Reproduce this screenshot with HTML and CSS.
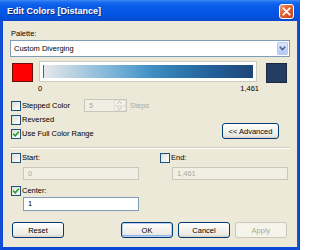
FILE: index.html
```html
<!DOCTYPE html>
<html>
<head>
<meta charset="utf-8">
<link rel="stylesheet" href="styles.css">
</head>
<body>
<div class="window">
  <div class="titlebar">
    <span class="title">Edit Colors [Distance]</span>
    <div class="close">
      <svg width="15" height="15" viewBox="0 0 15 15">
        <defs>
          <linearGradient id="cg" x1="0" y1="0" x2="1" y2="1">
            <stop offset="0" stop-color="#F29A7A"/>
            <stop offset="0.45" stop-color="#E0602F"/>
            <stop offset="1" stop-color="#C3401A"/>
          </linearGradient>
        </defs>
        <rect x="0.5" y="0.5" width="14" height="14" rx="2.5" fill="url(#cg)" stroke="#FFFFFF" stroke-width="1"/>
        <path d="M4.3 4.3 L10.7 10.7 M10.7 4.3 L4.3 10.7" stroke="#FFFFFF" stroke-width="1.8" stroke-linecap="round"/>
      </svg>
    </div>
  </div>
  <div class="client">
    <div class="label">Palette:</div>
    <div class="select">
      <span class="select-text">Custom Diverging</span>
      <div class="drop-btn">
        <svg width="7" height="5" viewBox="0 0 7 5"><path d="M0.8 0.8 L3.5 3.6 L6.2 0.8" fill="none" stroke="#4D6185" stroke-width="1.5"/></svg>
      </div>
    </div>
    <div class="ramp-row">
      <div class="swatch red"></div>
      <div class="ramp"><div class="ramp-inner"><span class="marker"></span></div></div>
      <div class="swatch navy"></div>
    </div>
    <div class="ramp-labels"><span class="lab-min">0</span><span class="lab-max">1,461</span></div>
    <div class="options">
      <div class="opts-left">
        <div class="row row-first">
          <span class="cb"></span><span class="cb-text">Stepped Color</span>
          <div class="spin">
            <span class="spin-val">5</span>
            <div class="spin-btns">
              <span class="spin-up"><svg width="5" height="3" viewBox="0 0 5 3"><path d="M0.5 2.6 L2.5 0.5 L4.5 2.6" fill="none" stroke="#B8B6AA" stroke-width="1"/></svg></span>
              <span class="spin-down"><svg width="5" height="3" viewBox="0 0 5 3"><path d="M0.5 0.4 L2.5 2.5 L4.5 0.4" fill="none" stroke="#B8B6AA" stroke-width="1"/></svg></span>
            </div>
          </div>
          <span class="steps">Steps</span>
        </div>
        <div class="row">
          <span class="cb"></span><span class="cb-text">Reversed</span>
        </div>
        <div class="row">
          <span class="cb checked"><svg width="8" height="8" viewBox="0 0 8 8"><path d="M1.2 3.8 L3.2 5.8 L6.8 1.8" fill="none" stroke="#21A121" stroke-width="1.6"/></svg></span><span class="cb-text">Use Full Color Range</span>
        </div>
      </div>
      <button class="btn advanced">&lt;&lt; Advanced</button>
    </div>
    <div class="sep"></div>
    <div class="range">
      <div class="range-col left-col">
        <div class="cb-row"><span class="cb"></span><span class="cb-text">Start:</span></div>
        <div class="input disabled start-input">0</div>
      </div>
      <div class="range-col right-col">
        <div class="cb-row"><span class="cb"></span><span class="cb-text">End:</span></div>
        <div class="input disabled end-input">1,461</div>
      </div>
    </div>
    <div class="center-block">
      <div class="cb-row"><span class="cb checked"><svg width="8" height="8" viewBox="0 0 8 8"><path d="M1.2 3.8 L3.2 5.8 L6.8 1.8" fill="none" stroke="#21A121" stroke-width="1.6"/></svg></span><span class="cb-text">Center:</span></div>
      <div class="input center-input">1</div>
    </div>
    <div class="buttons">
      <button class="btn reset">Reset</button>
      <div class="btn-group">
        <button class="btn default">OK</button>
        <button class="btn">Cancel</button>
        <button class="btn disabled-btn">Apply</button>
      </div>
    </div>
  </div>
</div>
</body>
</html>
```

FILE: styles.css
```css
html, body {
  margin: 0;
  padding: 0;
}
body {
  width: 300px;
  height: 250px;
  overflow: hidden;
  font-family: "Liberation Sans", Arial, sans-serif;
  font-size: 7.5px;
  color: #000;
}
.window {
  width: 300px;
  height: 250px;
  display: flex;
  flex-direction: column;
  background: linear-gradient(to right, #0B3FC9 0, #1D5BE0 1px, #0B48D6 2px, #0B48D6 297px, #1D5BE0 298px, #0733B5 300px);
}
.titlebar {
  height: 21px;
  flex: none;
  display: flex;
  align-items: center;
  justify-content: space-between;
  padding: 0 5px 0 7px;
  background: linear-gradient(#3D8BF7 0, #1C6EF0 2px, #0A5EE9 5px, #0555E4 12px, #0450DA 18px, #0848C9 21px);
}
.title {
  color: #fff;
  font-weight: bold;
  font-size: 9px;
  text-shadow: 1px 1px 0 #0A2E8A;
  margin-top: 1px;
}
.close {
  width: 15px;
  height: 15px;
  margin-top: 2px;
  margin-right: 1px;
}
.close svg { display: block; }
.client {
  flex: 1;
  margin: 0 3px 3px 3px;
  background: #ECE9D8;
  padding: 0 7px;
  display: flex;
  flex-direction: column;
}
.label {
  margin-top: 8px;
  height: 10px;
  line-height: 10px;
  padding-left: 1px;
}
.select {
  margin-top: 1px;
  height: 17px;
  box-sizing: border-box;
  border: 1px solid #7F9DB9;
  background: #fff;
  display: flex;
  align-items: center;
  justify-content: space-between;
  padding: 0 1px 0 3px;
}
.drop-btn {
  width: 11px;
  height: 13px;
  box-sizing: border-box;
  border: 1px solid #B9CBF3;
  border-radius: 1px;
  background: linear-gradient(#DDE7FD, #C1D3FB 60%, #B4C8F6);
  display: flex;
  align-items: center;
  justify-content: center;
}
.drop-btn svg { display: block; }
.ramp-row {
  margin-top: 4px;
  height: 21px;
  display: flex;
  align-items: flex-start;
}
.swatch {
  flex: none;
  box-sizing: border-box;
  width: 21px;
  height: 19px;
  margin-top: 2px;
}
.swatch.red {
  margin-left: 2px;
  background: #FF0000;
  border: 1px solid #6B0F0F;
}
.swatch.navy {
  margin-left: 9px;
  background: #243D63;
  border: 1px solid #1A2840;
  height: 20px;
}
.ramp {
  flex: none;
  margin-left: 6px;
  width: 218px;
  height: 21px;
  box-sizing: border-box;
  border: 1px solid #CFCCBE;
  background: #fff;
  padding: 3px 3px 3px 3px;
}
.ramp-inner {
  position: relative;
  height: 13px;
  background: linear-gradient(to right, #E7E9EB 0%, #B7D0E1 15%, #8CBCDA 28%, #5FA3D0 42%, #3F8EC2 52%, #2E77AE 66%, #24609A 80%, #1D4677 100%);
}
.marker {
  position: absolute;
  left: 0;
  top: 0;
  width: 1px;
  height: 13px;
  background: #B23A2A;
}
.ramp-labels {
  margin-top: 2px;
  height: 10px;
  line-height: 10px;
  display: flex;
  justify-content: space-between;
  padding: 0 31px 0 28px;
}
.options {
  margin-top: 4px;
  display: flex;
  justify-content: space-between;
}
.opts-left {
  display: flex;
  flex-direction: column;
}
.row {
  height: 14px;
  display: flex;
  align-items: center;
  padding-left: 1px;
}
.row-first { height: 15px; }
.cb {
  flex: none;
  width: 10px;
  height: 10px;
  box-sizing: border-box;
  border: 1px solid #1C5180;
  background: linear-gradient(135deg, #DCDCD7 0%, #F2F2EE 60%, #FFFFFF 100%);
  display: flex;
  align-items: center;
  justify-content: center;
}
.cb svg { display: block; }
.cb-text {
  margin-left: 1px;
  line-height: 10px;
}
.spin {
  margin-left: 14px;
  width: 43px;
  height: 13px;
  box-sizing: border-box;
  border: 1px solid #C9C7BA;
  background: #F1EFE4;
  display: flex;
  align-items: center;
  justify-content: space-between;
  padding-left: 4px;
  color: #ACA899;
}
.spin-btns {
  width: 12px;
  height: 11px;
  display: flex;
  flex-direction: column;
}
.spin-btns span {
  flex: 1;
  box-sizing: border-box;
  border: 1px solid #E4E2D6;
  background: #F4F3EC;
  display: flex;
  align-items: center;
  justify-content: center;
}
.spin-btns svg { display: block; }
.steps {
  margin-left: 3px;
  color: #ACA899;
}
.btn {
  font-family: inherit;
  font-size: 7.5px;
  color: #000;
  box-sizing: border-box;
  height: 16px;
  padding: 0;
  border: 1px solid #003C74;
  border-radius: 3px;
  background: linear-gradient(#FFFFFF 0%, #F5F4EF 40%, #ECEBE5 80%, #D8D3C8 100%);
  line-height: 13px;
}
.advanced {
  align-self: flex-end;
  width: 57px;
  margin-bottom: 2px;
  margin-right: 11px;
}
.sep {
  margin-top: 6px;
  height: 0;
  border-top: 1px solid #D0CDBE;
  border-bottom: 1px solid #FFFFFF;
}
.range {
  display: flex;
}
.range-col {
  display: flex;
  flex-direction: column;
}
.left-col { width: 149px; }
.right-col { width: 131px; }
.cb-row {
  margin-top: 4px;
  height: 10px;
  display: flex;
  align-items: center;
  padding-left: 1px;
}
.input {
  box-sizing: border-box;
  height: 13px;
  line-height: 11px;
  border: 1px solid #7F9DB9;
  background: #fff;
  padding-left: 4px;
  margin-top: 4px;
  margin-left: 13px;
}
.input.disabled {
  border-color: #C9C7BA;
  background: #F1EFE4;
  color: #ACA899;
}
.start-input { width: 116px; }
.end-input { width: 116px; }
.center-block {
  display: flex;
  flex-direction: column;
}
.center-block .cb-row { margin-top: 6px; }
.center-input {
  width: 116px;
  height: 14px;
  line-height: 12px;
  margin-top: 1px;
}
.buttons {
  margin-top: 11px;
  display: flex;
  justify-content: space-between;
}
.btn-group {
  display: flex;
  gap: 5px;
  margin-right: 3px;
}
.buttons .btn { width: 52px; }
.reset { margin-left: 2px; }
.btn.default {
  box-shadow: inset 0 0 0 1px #B8D0F4, inset 0 -1px 0 1px #94B3E8;
}
.btn.disabled-btn {
  border-color: #C9C7BA;
  background: #F5F4EA;
  color: #ACA899;
}
```
